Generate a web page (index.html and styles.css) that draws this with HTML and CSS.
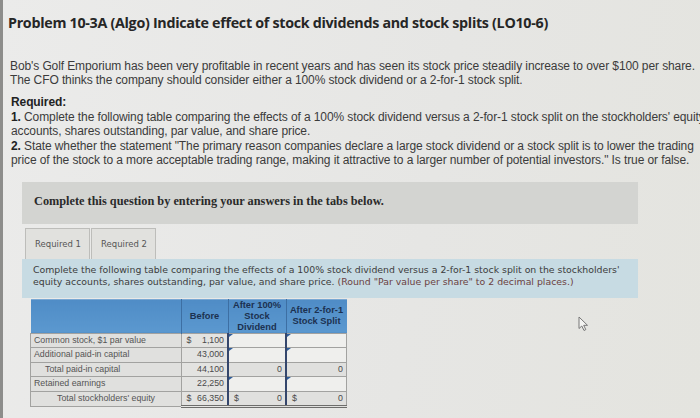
FILE: index.html
```html
<!DOCTYPE html>
<html>
<head>
<meta charset="utf-8">
<link rel="stylesheet" href="styles.css">
</head>
<body>
<div class="page">
  <h1 class="title">Problem 10-3A (Algo) Indicate effect of stock dividends and stock splits (LO10-6)</h1>
  <p class="intro">Bob's Golf Emporium has been very profitable in recent years and has seen its stock price steadily increase to over $100 per share.<br>The CFO thinks the company should consider either a 100% stock dividend or a 2-for-1 stock split.</p>
  <div class="required">
    <div class="req-head">Required:</div>
    <div><b>1.</b> Complete the following table comparing the effects of a 100% stock dividend versus a 2-for-1 stock split on the stockholders' equity</div>
    <div>accounts, shares outstanding, par value, and share price.</div>
    <div><b>2.</b> State whether the statement "The primary reason companies declare a large stock dividend or a stock split is to lower the trading</div>
    <div>price of the stock to a more acceptable trading range, making it attractive to a larger number of potential investors." Is true or false.</div>
  </div>
  <div class="instr">Complete this question by entering your answers in the tabs below.</div>
  <div class="tabs">
    <div class="tab">Required 1</div>
    <div class="tab">Required 2</div>
  </div>
  <div class="note">Complete the following table comparing the effects of a 100% stock dividend versus a 2-for-1 stock split on the stockholders'<br>equity accounts, shares outstanding, par value, and share price. <span class="round">(Round "Par value per share" to 2 decimal places.)</span></div>
  <table class="grid">
    <thead>
      <tr>
        <th class="c-label"></th>
        <th class="c-before">Before</th>
        <th class="c-div">After 100%<br>Stock<br>Dividend</th>
        <th class="c-split">After 2-for-1<br>Stock Split</th>
      </tr>
    </thead>
    <tbody>
      <tr>
        <td class="lbl">Common stock, $1 par value</td>
        <td class="val"><span class="cur">$</span>1,100</td>
        <td class="inp"></td>
        <td class="inp"></td>
      </tr>
      <tr>
        <td class="lbl">Additional paid-in capital</td>
        <td class="val">43,000</td>
        <td class="inp"></td>
        <td class="inp"></td>
      </tr>
      <tr>
        <td class="lbl ind1">Total paid-in capital</td>
        <td class="val">44,100</td>
        <td class="calc">0</td>
        <td class="calc">0</td>
      </tr>
      <tr>
        <td class="lbl">Retained earnings</td>
        <td class="val">22,250</td>
        <td class="inp"></td>
        <td class="inp"></td>
      </tr>
      <tr class="total">
        <td class="lbl ind2">Total stockholders' equity</td>
        <td class="val"><span class="cur">$</span>66,350</td>
        <td class="calc"><span class="cur">$</span>0</td>
        <td class="calc"><span class="cur">$</span>0</td>
      </tr>
    </tbody>
  </table>
  <svg class="cursor" width="12" height="16" viewBox="0 0 12 16"><path d="M1 1 L1 12.5 L3.8 10 L6 14.5 L7.8 13.6 L5.7 9.3 L9.5 9.3 Z" fill="#f4f4f2" stroke="#777" stroke-width="1"/></svg>
</div>
</body>
</html>
```
FILE: styles.css
```css
html, body {
  margin: 0;
  padding: 0;
  width: 700px;
  height: 418px;
  overflow: hidden;
}
body {
  background: linear-gradient(100deg, #ebebea 0%, #e6e6e4 60%, #e4e4df 100%);
  font-family: "Liberation Sans", Arial, sans-serif;
  color: #3a3a3a;
}
.page {
  position: relative;
  height: 418px;
  border-left: 3px solid #8d8d8b;
  padding-left: 5px;
  white-space: nowrap;
}
.title {
  margin: 0;
  padding-top: 13px;
  font-family: "Open Sans", sans-serif;
  font-weight: 700;
  font-size: 14.3px;
  line-height: 19px;
  color: #262626;
  letter-spacing: -0.3px;
}
.intro {
  margin: 27px 0 0 2px;
  font-family: "Liberation Sans", Arial, sans-serif;
  font-size: 12px;
  line-height: 14px;
  letter-spacing: -0.1px;
  color: #3b3b3b;
}
.required {
  margin: 8px 0 0 3px;
  font-family: "Liberation Sans", Arial, sans-serif;
  font-size: 12px;
  line-height: 14.5px;
  letter-spacing: -0.1px;
  color: #3b3b3b;
}
.required b, .req-head {
  font-weight: 700;
  color: #222;
}
.instr {
  margin: 14px 0 0 14px;
  width: 616px;
  height: 42px;
  box-sizing: border-box;
  padding: 12px 0 0 12px;
  background: #d3d4d1;
  font-family: "Liberation Serif", serif;
  font-weight: 700;
  font-size: 12.3px;
  color: #2a2a2a;
}
.tabs {
  display: flex;
  margin: 4px 0 0 17px;
}
.tab {
  width: 65px;
  height: 31px;
  box-sizing: border-box;
  border: 1px solid #bdbdba;
  border-bottom: none;
  background: #e1e1de;
  font-family: "DejaVu Sans", sans-serif;
  font-size: 8.5px;
  line-height: 31px;
  padding-left: 9px;
  color: #555;
}
.tab + .tab {
  margin-left: 1px;
}
.note {
  margin: 0 0 0 14px;
  width: 616px;
  box-sizing: border-box;
  padding: 5px 0 10px 11px;
  background: #c7dbe3;
  font-family: "DejaVu Sans", sans-serif;
  font-size: 9.35px;
  line-height: 12px;
  color: #3c3c3c;
}
.round {
  color: #6b3f3f;
}
.grid {
  margin: 1px 0 0 22px;
  border-collapse: collapse;
  font-family: "Liberation Sans", Arial, sans-serif;
  font-size: 8.8px;
  color: #4a4a4a;
}
.grid th {
  height: 31px;
  padding: 0;
  background: linear-gradient(#4f8cc6, #5b98cf);
  color: #1c3150;
  font-size: 9.3px;
  font-weight: 700;
  line-height: 11px;
  text-align: center;
  border-right: 1px solid #3d6fa3;
  border-top: 1px solid #7aa8d3;
}
.grid th:last-child { border-right: none; }
.c-label { width: 150px; }
.c-before { width: 46px; }
.c-div { width: 57px; }
.c-split { width: 60px; }
.grid td {
  height: 13.5px;
  padding: 0 3px;
  line-height: 13px;
  border: 1px solid #a2a2a0;
}
.lbl {
  background: #e0e0de;
  text-align: left;
  color: #555;
}
.ind1 { padding-left: 14px !important; }
.ind2 { padding-left: 26px !important; }
.val {
  background: #e3e3e1;
  text-align: right;
  position: relative;
}
.cur {
  float: left;
  padding-left: 2px;
}
.inp {
  background: #efefed;
  border-left: 2px solid #34466c !important;
  position: relative;
}
.inp::before {
  content: "";
  position: absolute;
  left: 0;
  top: 0;
  border-top: 3px solid #2f5d9a;
  border-right: 4px solid transparent;
}
.calc {
  background: #e0e0de;
  text-align: right;
  border-left: 2px solid #34466c !important;
}
.total td {
  border-bottom: 3px double #6d6d6b;
}
.total .lbl {
  border-bottom: 1px solid #a2a2a0;
}
.cursor {
  position: absolute;
  left: 575px;
  top: 316px;
}
```
